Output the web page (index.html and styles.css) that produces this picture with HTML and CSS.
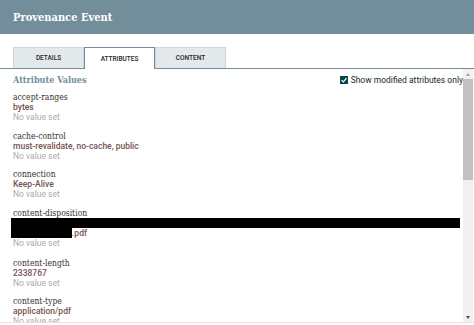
FILE: index.html
```html
<!DOCTYPE html>
<html lang="en">
<head>
  <meta charset="UTF-8" />
  <title>Provenance Event</title>
  <link rel="stylesheet" href="styles.css">
</head>
<body>
  <div class="dialog">
    <div class="dialog-header">Provenance Event</div>

    <div class="tabs">
      <div class="tab">Details</div>
      <div class="tab active">Attributes</div>
      <div class="tab">Content</div>
    </div>

    <div class="panel">
      <div class="panel-body">
        <div class="section-head">
          <div class="section-title">Attribute Values</div>
          <label class="modified-toggle">
            <span class="checkbox"><svg viewBox="0 0 10 10" width="8" height="8"><path d="M2 5.2 L4.2 7.3 L8.2 2.6" fill="none" stroke="#fff" stroke-width="1.6"/></svg></span>
            Show modified attributes only
          </label>
        </div>

        <div class="attr">
          <div class="attr-name">accept-ranges</div>
          <div class="attr-value">bytes</div>
          <div class="attr-none">No value set</div>
        </div>
        <div class="attr">
          <div class="attr-name">cache-control</div>
          <div class="attr-value">must-revalidate, no-cache, public</div>
          <div class="attr-none">No value set</div>
        </div>
        <div class="attr">
          <div class="attr-name">connection</div>
          <div class="attr-value">Keep-Alive</div>
          <div class="attr-none">No value set</div>
        </div>
        <div class="attr tall">
          <div class="attr-name">content-disposition</div>
          <div class="attr-value">
            <div class="redact redact-full"></div>
            <span class="redact redact-short"></span>.pdf
          </div>
          <div class="attr-none">No value set</div>
        </div>
        <div class="attr">
          <div class="attr-name">content-length</div>
          <div class="attr-value">2338767</div>
          <div class="attr-none">No value set</div>
        </div>
        <div class="attr">
          <div class="attr-name">content-type</div>
          <div class="attr-value">application/pdf</div>
          <div class="attr-none">No value set</div>
        </div>
      </div>

      <div class="scrollbar">
        <div class="scroll-btn up"></div>
        <div class="scroll-thumb"></div>
        <div class="scroll-track"></div>
        <div class="scroll-btn down"></div>
      </div>
    </div>
  </div>
</body>
</html>
```

FILE: styles.css
```css
* { box-sizing: border-box; }
html, body {
  margin: 0;
  padding: 0;
  height: 100%;
  background-color: #fff;
  overflow: hidden;
  font-family: Roboto, "Liberation Sans", sans-serif;
  color: #262626;
}

.dialog {
  width: 474px;
  height: 325px;
}

.dialog-header {
  height: 34px;
  padding-left: 13px;
  display: flex;
  align-items: center;
  background-color: #728e9b;
  color: #fff;
  font-family: "DejaVu Serif Condensed", "DejaVu Serif", serif;
  font-stretch: condensed;
  font-weight: bold;
  font-size: 11px;
}

/* tabs */
.tabs {
  display: flex;
  margin-top: 13px;
  padding-left: 13px;
  border-bottom: 1px solid #728e9b;
}
.tab {
  width: 71px;
  height: 21px;
  display: flex;
  align-items: center;
  justify-content: center;
  background-color: #e3e8eb;
  border: 1px solid #cfd6d9;
  border-bottom: none;
  font-size: 6.5px;
  font-weight: 500;
  text-transform: uppercase;
  color: #262626;
}
.tab.active {
  background-color: #fff;
  border-color: #728e9b;
  margin-bottom: -1px;
  height: 22px;
}

/* attribute panel */
.panel {
  display: flex;
  height: 254px;
  border-bottom: 1px solid #e3e3e3;
}
.panel-body {
  flex: 1;
  padding: 1px 0 0 13px;
  overflow: hidden;
}
.section-head {
  height: 20px;
  display: flex;
  align-items: center;
  justify-content: space-between;
  margin-bottom: 2px;
}
.section-title {
  font-family: "DejaVu Serif Condensed", "DejaVu Serif", serif;
  font-stretch: condensed;
  font-weight: bold;
  font-size: 9px;
  color: #728e9b;
}
.modified-toggle {
  display: flex;
  align-items: center;
  gap: 3px;
  font-size: 8.5px;
  color: #262626;
}
.checkbox {
  width: 8px;
  height: 8px;
  background-color: #004849;
  display: flex;
  align-items: center;
  justify-content: center;
}

.attr {
  margin-bottom: 8.5px;
  line-height: 10px;
}
.attr.tall {
  margin-bottom: 10px;
}
.attr-name {
  font-family: "DejaVu Serif Condensed", "DejaVu Serif", serif;
  font-stretch: condensed;
  font-size: 8.5px;
  color: #333;
}
.attr-value {
  font-size: 8.5px;
  font-weight: 500;
  color: #775351;
}
.attr-none {
  font-size: 8.5px;
  color: #aaaaaa;
}
.redact {
  background-color: #000;
  height: 10px;
}
.redact-full {
  margin-left: -2px;
  width: 449px;
}
.redact-short {
  display: inline-block;
  vertical-align: top;
  margin-left: -2px;
  width: 61px;
}

/* scrollbar */
.scrollbar {
  width: 10px;
  margin-right: 1px;
  display: flex;
  flex-direction: column;
  background-color: #f1f1f1;
}
.scroll-btn {
  height: 10px;
  display: flex;
  align-items: center;
  justify-content: center;
}
.scroll-btn.up::before {
  content: "";
  border: 2.5px solid transparent;
  border-bottom: 3px solid #a3a3a3;
  border-top: none;
}
.scroll-btn.down::before {
  content: "";
  border: 2.5px solid transparent;
  border-top: 3px solid #505050;
  border-bottom: none;
}
.scroll-thumb {
  height: 101px;
  background-color: #c1c1c1;
}
.scroll-track {
  flex: 1;
}
```
